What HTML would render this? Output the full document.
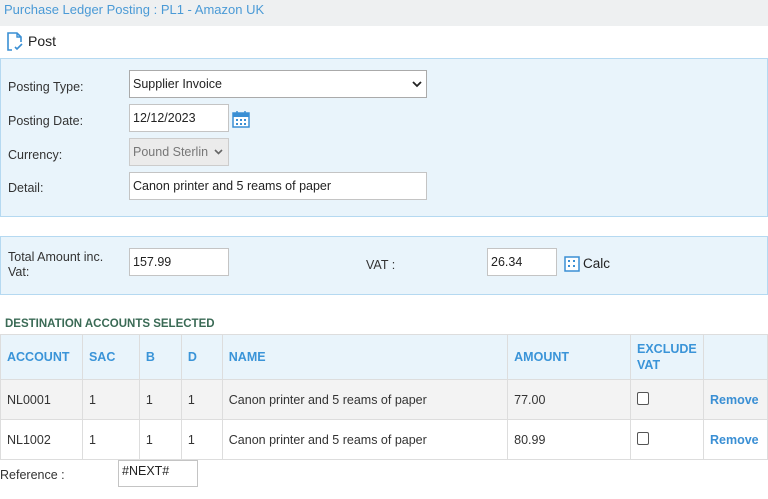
<!DOCTYPE html>
<html><head><meta charset="utf-8"><style>
*{box-sizing:border-box;margin:0;padding:0}
body{width:768px;height:499px;background:#fff;font-family:"Liberation Sans",sans-serif;font-size:12px;color:#333;position:relative;overflow:hidden}
.a{position:absolute}
.hdr{left:0;top:0;width:768px;height:26px;background:#eef0f1}
.title{left:4px;top:2px;color:#4a9ad6;font-size:13px}
.panel{left:0;width:768px;background:#e9f4fb;border:1px solid #b5d9f1}
.lbl{font-size:12.5px;color:#333}
.inp{background:#fff;border:1px solid #c4c4c4;font-size:12.5px;padding-left:3px;line-height:26px;height:28px;color:#222}
.sec{left:5px;top:318px;font-size:11.5px;color:#3a6a55;font-weight:600;letter-spacing:0}
table{position:absolute;left:0;top:334px;width:768px;border-collapse:collapse}
td{border:1px solid #ddd;padding-left:6px;font-size:12.5px;color:#333}
th{border:1px solid #ddd;padding-left:6px;text-align:left;color:#3a94d8;font-size:12.5px;background:#e9f4fb}
.r1 td{background:#f3f3f3}
.rm{color:#3a8fd4;font-weight:bold;font-size:12.5px}
.cb{display:inline-block;width:12px;height:13px;border:1px solid #555;border-radius:2px;background:#fff}
</style></head><body>
<div class="a hdr"></div>
<div class="a title">Purchase Ledger Posting : PL1 - Amazon UK</div>
<svg class="a" style="left:6px;top:32px" width="19" height="20" viewBox="0 0 19 20"><path d="M7 1H2v17h4M7 1h4l4 4v5" fill="none" stroke="#3a8fd4" stroke-width="1.6"/><path d="M11 1v4h4" fill="none" stroke="#3a8fd4" stroke-width="1.4"/><path d="M9 15l2 2 5-5" fill="none" stroke="#3a8fd4" stroke-width="1.6"/></svg>
<div class="a" style="left:28px;top:33px;font-size:14px;color:#222">Post</div>

<div class="a panel" style="top:58px;height:159px"></div>
<div class="a lbl" style="left:8px;top:80px">Posting Type:</div>
<div class="a inp" style="left:129px;top:70px;width:298px;border-color:#aaa">Supplier Invoice</div>
<svg class="a" style="left:412px;top:80px" width="10" height="8" viewBox="0 0 10 8"><path d="M1 2l4 4 4-4" fill="none" stroke="#222" stroke-width="1.8"/></svg>
<div class="a lbl" style="left:8px;top:114px">Posting Date:</div>
<div class="a inp" style="left:129px;top:104px;width:100px">12/12/2023</div>
<svg class="a" style="left:232px;top:110px" width="18" height="18" viewBox="0 0 18 18"><rect x="1" y="3" width="16" height="14" fill="#fff" stroke="#3a8fd4" stroke-width="1.5"/><rect x="1" y="3" width="16" height="4" fill="#3a8fd4"/><path d="M5 1v4M13 1v4" stroke="#3a8fd4" stroke-width="1.5"/><g fill="#3a8fd4"><rect x="4" y="9" width="2" height="2"/><rect x="8" y="9" width="2" height="2"/><rect x="12" y="9" width="2" height="2"/><rect x="4" y="13" width="2" height="2"/><rect x="8" y="13" width="2" height="2"/><rect x="12" y="13" width="2" height="2"/></g></svg>
<div class="a lbl" style="left:8px;top:148px">Currency:</div>
<div class="a inp" style="left:129px;top:138px;width:100px;background:#ebebeb;color:#777;border-color:#ccc">Pound Sterlin</div>
<svg class="a" style="left:214px;top:148px" width="9" height="7" viewBox="0 0 9 7"><path d="M1 2l3.5 3.5L8 2" fill="none" stroke="#666" stroke-width="1.6"/></svg>
<div class="a lbl" style="left:8px;top:181px">Detail:</div>
<div class="a inp" style="left:129px;top:172px;width:298px">Canon printer and 5 reams of paper</div>

<div class="a panel" style="top:236px;height:59px"></div>
<div class="a lbl" style="left:8px;top:250px;line-height:15px">Total Amount inc.<br>Vat:</div>
<div class="a inp" style="left:129px;top:248px;width:100px">157.99</div>
<div class="a lbl" style="left:366px;top:258px">VAT :</div>
<div class="a inp" style="left:487px;top:248px;width:70px">26.34</div>
<svg class="a" style="left:564px;top:256px" width="16" height="16" viewBox="0 0 16 16"><rect x="1" y="1" width="14" height="14" fill="#fff" stroke="#3a8fd4" stroke-width="1.5"/><g fill="#3a8fd4"><rect x="4" y="4" width="2" height="2"/><rect x="9" y="4" width="2" height="2"/><rect x="4" y="9" width="2" height="2"/><rect x="9" y="9" width="2" height="2"/></g></svg>
<div class="a" style="left:583px;top:256px;font-size:13.5px;color:#222">Calc</div>

<div class="a sec">DESTINATION ACCOUNTS SELECTED</div>
<table>
<colgroup><col style="width:82px"><col style="width:57px"><col style="width:42px"><col style="width:41px"><col style="width:286px"><col style="width:123px"><col style="width:73px"><col style="width:64px"></colgroup>
<tr style="height:45px"><th>ACCOUNT</th><th>SAC</th><th>B</th><th>D</th><th>NAME</th><th>AMOUNT</th><th style="line-height:16px">EXCLUDE<br>VAT</th><th></th></tr>
<tr class="r1" style="height:40px"><td>NL0001</td><td>1</td><td>1</td><td>1</td><td>Canon printer and 5 reams of paper</td><td>77.00</td><td><span class="cb"></span></td><td class="rm">Remove</td></tr>
<tr style="height:40px"><td>NL1002</td><td>1</td><td>1</td><td>1</td><td>Canon printer and 5 reams of paper</td><td>80.99</td><td><span class="cb"></span></td><td class="rm">Remove</td></tr>
</table>
<div class="a lbl" style="left:0;top:468px">Reference :</div>
<div class="a inp" style="left:118px;top:460px;width:80px;height:27px;line-height:12px;padding-top:4px">#NEXT#</div>
</body></html>
